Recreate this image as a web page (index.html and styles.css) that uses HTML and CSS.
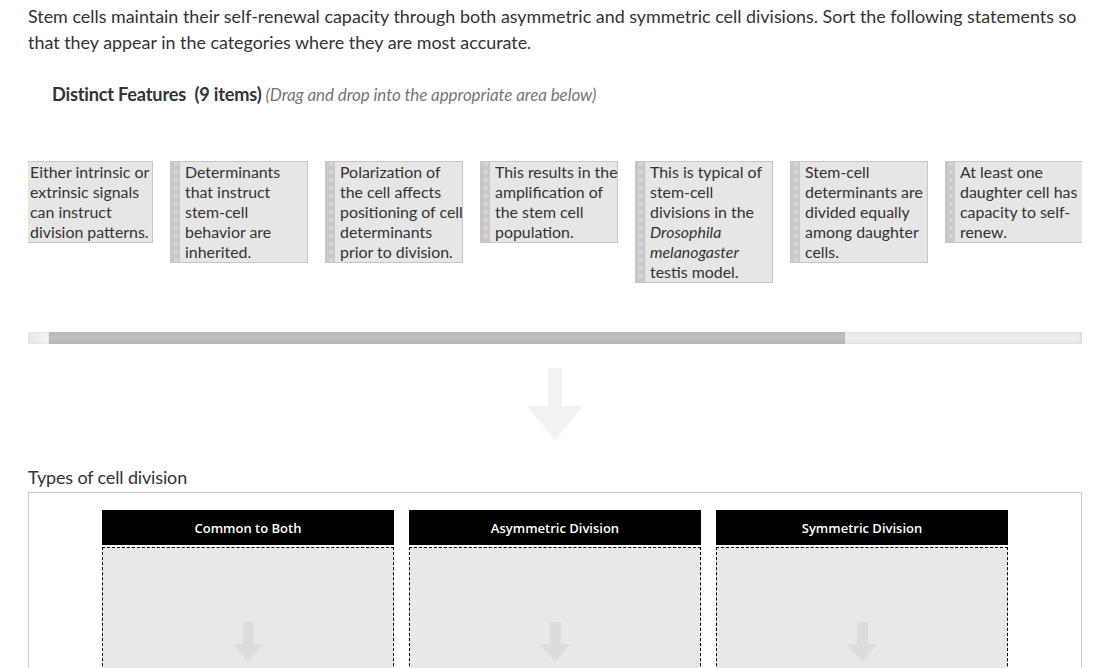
FILE: index.html
```html
<!DOCTYPE html>
<html lang="en">
<head>
    <meta charset="UTF-8">
    <title>Types of cell division</title>
    <link rel="stylesheet" href="styles.css">
</head>
<body>
    <div class="page">
        <p class="intro">Stem cells maintain their self-renewal capacity through both asymmetric and symmetric cell divisions. Sort the following statements so that they appear in the categories where they are most accurate.</p>

        <div class="pool-title">
            <b>Distinct Features&nbsp; (9 items)</b> <i>(Drag and drop into the appropriate area below)</i>
        </div>

        <div class="pool">
            <div class="pool-row">
                <div class="card"><span class="grip"></span><span class="card-text">Either intrinsic or extrinsic signals can instruct division patterns.</span></div>
                <div class="card"><span class="grip"></span><span class="card-text">Determinants that instruct stem-cell behavior are inherited.</span></div>
                <div class="card"><span class="grip"></span><span class="card-text">Polarization of the cell affects positioning of cell determinants prior to division.</span></div>
                <div class="card"><span class="grip"></span><span class="card-text">This results in the amplification of the stem cell population.</span></div>
                <div class="card"><span class="grip"></span><span class="card-text">This is typical of stem-cell divisions in the <i>Drosophila melanogaster</i> testis model.</span></div>
                <div class="card"><span class="grip"></span><span class="card-text">Stem-cell determinants are divided equally among daughter cells.</span></div>
                <div class="card"><span class="grip"></span><span class="card-text">At least one daughter cell has capacity to self-renew.</span></div>
                <div class="card"><span class="grip"></span><span class="card-text">Both daughter cells retain stem-cell identity.</span></div>
                <div class="card"><span class="grip"></span><span class="card-text">Daughter cells adopt different fates.</span></div>
            </div>
        </div>

        <div class="scrollbar">
            <div class="scroll-btn"></div>
            <div class="scroll-thumb"></div>
            <div class="scroll-rest"></div>
        </div>

        <div class="big-arrow">
            <svg width="56" height="72" viewBox="0 0 56 72"><path d="M21 0h14v38h21L28 72 0 38h21z" fill="#f2f2f2"/></svg>
        </div>

        <h2 class="section-title">Types of cell division</h2>

        <div class="bins">
            <div class="bin">
                <div class="bin-head">Common to Both</div>
                <div class="bin-drop">
                    <svg width="30" height="40" viewBox="0 0 30 40"><path d="M10 0h11v22h9L15 40 0 22h10z" fill="#dcdcdc"/></svg>
                </div>
            </div>
            <div class="bin">
                <div class="bin-head">Asymmetric Division</div>
                <div class="bin-drop">
                    <svg width="30" height="40" viewBox="0 0 30 40"><path d="M10 0h11v22h9L15 40 0 22h10z" fill="#dcdcdc"/></svg>
                </div>
            </div>
            <div class="bin">
                <div class="bin-head">Symmetric Division</div>
                <div class="bin-drop">
                    <svg width="30" height="40" viewBox="0 0 30 40"><path d="M10 0h11v22h9L15 40 0 22h10z" fill="#dcdcdc"/></svg>
                </div>
            </div>
        </div>
    </div>
</body>
</html>
```

FILE: styles.css
```css
body {
    margin: 0;
    background: #fff;
    color: #333;
    font-family: Lato, "Open Sans", sans-serif;
}
.page {
    padding: 3px 24px 0 28px;
}
.intro {
    margin: 0;
    font-size: 17.9px;
    line-height: 26px;
}
.pool-title {
    margin: 29px 0 0 24px;
    line-height: 20px;
    height: 20px;
}
.pool-title b {
    font-size: 18.2px;
    line-height: 20px;
    letter-spacing: -0.2px;
}
.pool-title i {
    font-size: 17px;
    line-height: 20px;
    color: #777;
    letter-spacing: -0.1px;
}
.pool {
    margin-top: 57px;
    height: 171px;
    overflow: hidden;
}
.pool-row {
    display: flex;
    align-items: flex-start;
    gap: 17px;
    margin-left: -13px;
}
.card {
    flex: 0 0 138px;
    box-sizing: border-box;
    display: flex;
    background: #e6e6e6;
    border: 1px solid #c6c6c6;
    font-size: 15.9px;
    line-height: 20px;
    color: #333;
}
.grip {
    flex: 0 0 4px;
    border-left: 3px solid #c8c8c8;
    border-right: 2px solid #c8c8c8;
    background: repeating-linear-gradient(#d6d6d6 0 4px, #c8c8c8 4px 8px);
}
.card-text {
    padding-left: 5px;
    margin-right: -3px;
}
.scrollbar {
    display: flex;
    height: 12px;
    box-sizing: border-box;
}
.scroll-btn {
    width: 21px;
    background: linear-gradient(90deg, #e8e8e8, #f4f4f4);
    box-shadow: inset 0 0 2px #d0d0d0;
}
.scroll-thumb {
    width: 796px;
    background: linear-gradient(#b8b8b8, #c0c0c0 50%, #b4b4b4);
    box-shadow: inset 0 0 1px #a8a8a8;
}
.scroll-rest {
    flex: 1;
    background: linear-gradient(#e6e6e6, #f0f0f0 50%, #e4e4e4);
    box-shadow: inset -2px 0 2px #dcdcdc;
}
.big-arrow {
    display: flex;
    justify-content: center;
    margin-top: 24px;
    padding-right: 1px;
}
.big-arrow svg {
    display: block;
}
.section-title {
    margin: 25px 0 3px;
    font-size: 18px;
    line-height: 24px;
    font-weight: 400;
    letter-spacing: -0.15px;
    color: #333;
}
.bins {
    display: flex;
    justify-content: center;
    gap: 15px;
    border: 1px solid #ccc;
    padding-top: 17px;
    height: 300px;
}
.bin {
    width: 292px;
}
.bin-head {
    height: 35px;
    background: #000;
    color: #fff;
    font-family: "Open Sans", sans-serif;
    font-size: 13px;
    font-weight: 600;
    display: flex;
    align-items: center;
    justify-content: center;
    margin-bottom: 2px;
}
.bin-drop {
    height: 188px;
    background: #e8e8e8;
    border: 1px dashed #000;
    display: flex;
    align-items: center;
    justify-content: center;
}
.bin-drop svg {
    display: block;
}
```
